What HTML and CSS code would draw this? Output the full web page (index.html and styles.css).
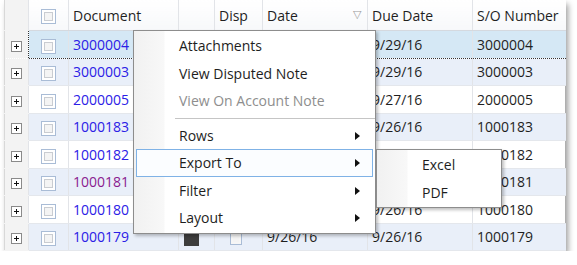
FILE: index.html
```html
<!DOCTYPE html>
<html>
<head>
<meta name="viewport" content="width=device-width, initial-scale=1">
<link rel="stylesheet" href="styles.css">
</head>
<body>

<div class="grid">
  <table>
    <colgroup>
      <col class="c-exp"><col class="c-chk"><col class="c-doc"><col class="c-blank">
      <col class="c-disp"><col class="c-date"><col class="c-due"><col class="c-so">
    </colgroup>
    <tr class="head">
      <th class="exp"></th>
      <th><span class="box"></span></th>
      <th>Document</th>
      <th></th>
      <th>Disp</th>
      <th class="datehead">Date <span class="filter">&#9661;</span></th>
      <th>Due Date</th>
      <th>S/O Number</th>
    </tr>
    <tr class="sel">
      <td class="exp"><span class="plus"></span></td>
      <td><span class="box"></span></td>
      <td class="link">3000004</td><td></td><td></td><td></td><td>9/29/16</td><td>3000004</td>
    </tr>
    <tr class="alt">
      <td class="exp"><span class="plus"></span></td>
      <td><span class="box"></span></td>
      <td class="link">3000003</td><td></td><td></td><td></td><td>9/29/16</td><td>3000003</td>
    </tr>
    <tr>
      <td class="exp"><span class="plus"></span></td>
      <td><span class="box"></span></td>
      <td class="link">2000005</td><td></td><td></td><td></td><td>9/27/16</td><td>2000005</td>
    </tr>
    <tr class="alt">
      <td class="exp"><span class="plus"></span></td>
      <td><span class="box"></span></td>
      <td class="link">1000183</td><td></td><td></td><td></td><td>9/26/16</td><td>1000183</td>
    </tr>
    <tr>
      <td class="exp"><span class="plus"></span></td>
      <td><span class="box"></span></td>
      <td class="link">1000182</td><td></td><td></td><td></td><td>9/26/16</td><td>1000182</td>
    </tr>
    <tr class="alt">
      <td class="exp"><span class="plus"></span></td>
      <td><span class="box"></span></td>
      <td class="link visited">1000181</td><td></td><td></td><td></td><td>9/26/16</td><td>1000181</td>
    </tr>
    <tr>
      <td class="exp"><span class="plus"></span></td>
      <td><span class="box"></span></td>
      <td class="link">1000180</td><td></td><td></td><td></td><td>9/26/16</td><td>1000180</td>
    </tr>
    <tr class="alt">
      <td class="exp"><span class="plus"></span></td>
      <td><span class="box"></span></td>
      <td class="link">1000179</td>
      <td><span class="swatch"></span></td>
      <td><span class="box small"></span></td>
      <td>9/26/16</td><td>9/26/16</td><td>1000179</td>
    </tr>
  </table>
</div>

<div class="menu">
  <div class="item">Attachments</div>
  <div class="item">View Disputed Note</div>
  <div class="item disabled">View On Account Note</div>
  <div class="sep"></div>
  <div class="item sub">Rows</div>
  <div class="item sub hot">Export To</div>
  <div class="item sub">Filter</div>
  <div class="item sub">Layout</div>
</div>

<div class="menu submenu">
  <div class="item">Excel</div>
  <div class="item">PDF</div>
</div>

</body>
</html>
```

FILE: styles.css
```css
body {
    margin: 0;
    background: #fff;
    font-family: "Open Sans", "Noto Sans", sans-serif;
    font-size: 14px;
    color: #1f1f1f;
}

/* The grid */
.grid {
    margin-left: 4px;
    width: 561px;
    box-shadow: 3px 4px 6px rgba(0, 0, 0, 0.4);
}

table {
    border-collapse: collapse;
    table-layout: fixed;
    width: 561px;
}

.c-exp { width: 24px; }
.c-chk { width: 40px; }
.c-doc { width: 110px; }
.c-blank { width: 36px; }
.c-disp { width: 48px; }
.c-date { width: 105px; }
.c-due { width: 105px; }
.c-so { width: 93px; }

th, td {
    padding: 0 0 0 4px;
    text-align: left;
    white-space: nowrap;
    overflow: hidden;
    border-left: 1px solid #e2e4e8;
    border-bottom: 1px solid #e4e7ec;
}

th {
    height: 30px;
    font-weight: normal;
    background: linear-gradient(#fff, #f7f8fa);
    border-bottom: 1px solid #d5d9df;
}

td {
    height: 26.5px;
}

tr.alt td { background: #e9eff9; }
tr.sel td { background: #d5e8f5; border-top: 1px dotted #333; border-bottom: 1px dotted #333; }
tr.sel td:nth-child(2) { border-left: 1px dotted #333; }

th.exp, td.exp, tr.alt td.exp, tr.sel td.exp {
    background: #f3f3f3;
    border-left: 1px solid #d8d8d8;
    border-top: none;
    border-bottom-color: #f3f3f3;
    padding: 0;
    text-align: center;
}

th:nth-child(2), td:nth-child(2) { text-align: center; padding: 0; }

.link { color: #2b20e6; }
.link.visited { color: #8a1a8f; }

.datehead { position: relative; }
.filter {
    position: absolute;
    right: 6px;
    top: 6px;
    font-size: 11px;
    color: #9a9a9a;
}

/* small widgets */
.plus {
    display: inline-block;
    width: 9px;
    height: 9px;
    border: 1px solid #8a8a8a;
    background: #fff;
    position: relative;
    vertical-align: middle;
}
.plus:before, .plus:after {
    content: "";
    position: absolute;
    background: #111;
}
.plus:before { left: 2px; top: 4px; width: 5px; height: 1px; }
.plus:after { left: 4px; top: 2px; width: 1px; height: 5px; }

.box {
    display: inline-block;
    width: 13px;
    height: 13px;
    border: 1px solid #a9bcd6;
    background: #f4f4f4;
    box-shadow: inset 0 0 0 2px #fff, inset 0 0 0 3px #c9ccd1;
    vertical-align: middle;
}
.box.small {
    width: 10px;
    height: 11px;
    box-shadow: inset 0 0 0 2px #f6f6f6;
    margin-left: 11px;
}

.swatch {
    display: inline-block;
    width: 15px;
    height: 15px;
    background: #3d3d3d;
    margin-left: 1px;
    vertical-align: middle;
}

/* The context menu lies over the grid */
.menu {
    position: absolute;
    left: 133px;
    top: 30px;
    width: 241px;
    padding: 1px 0;
    border: 1px solid #8d8d8d;
    background: linear-gradient(90deg, #f1f1f1 0, #f8f8f8 30px, #fff 31px);
    box-shadow: 2px 2px 3px rgba(0, 0, 0, 0.25);
}

.item {
    position: relative;
    height: 25.5px;
    line-height: 25.5px;
    margin: 0 2px;
    padding-left: 42px;
    border: 1px solid transparent;
    color: #1e1e1e;
}

.item.disabled { color: #8e8e8e; }

.item.hot {
    border-color: #7fb2e6;
    background: #fbfdff;
}

.item.sub:after {
    content: "";
    position: absolute;
    right: 12px;
    top: 9px;
    border-left: 5px solid #111;
    border-top: 4px solid transparent;
    border-bottom: 4px solid transparent;
}

.sep {
    height: 1px;
    margin: 3px 0 3px 41px;
    background: #c5c5c5;
}

.submenu {
    left: 376px;
    top: 149px;
    width: 124px;
}
```
